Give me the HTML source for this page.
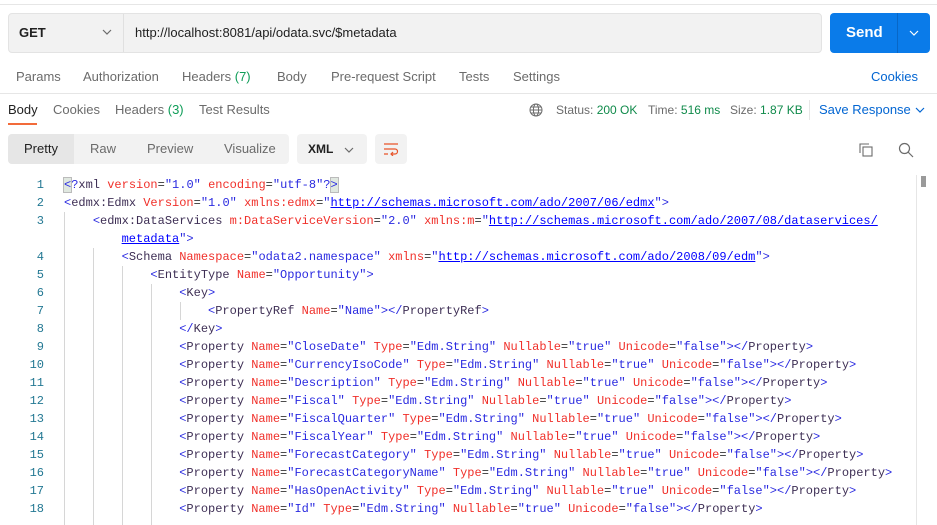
<!DOCTYPE html>
<html><head><meta charset="utf-8"><style>
*{margin:0;padding:0;box-sizing:border-box}
body{width:937px;height:525px;overflow:hidden;background:#fff;font-family:"Liberation Sans",sans-serif;position:relative;color:#6b6b6b}
.abs{position:absolute}
.t13{font-size:13px;white-space:nowrap}
.code{position:absolute;left:0;top:176px;font-family:"Liberation Mono",monospace;font-size:12px;}
.row{height:18px;line-height:18px;white-space:pre;position:relative}
.ln{position:absolute;left:0;width:44px;text-align:right;color:#237893}
.tx{position:absolute;left:64px}
.b{color:#2a2ae0}.n{color:#3e2f55}.a{color:#f0302a}.v{color:#2a2ae0}.e{color:#333}
.u{color:#0000ff;text-decoration:underline}
.g{position:absolute;width:1px;background:#d6d6d6}
</style></head><body>
<div class="abs" style="left:0;top:4px;width:937px;height:1px;background:#e6e6e6"></div>
<div class="abs" style="left:8px;top:13px;width:814px;height:40px;background:#f2f2f2;border:1px solid #e3e3e3;border-radius:4px"></div>
<div class="abs" style="left:123px;top:14px;width:1px;height:38px;background:#e0e0e0"></div>
<div class="abs t13" style="left:19px;top:25px;font-weight:bold;color:#212121">GET</div>
<svg class="abs" style="left:102px;top:29px" width="10" height="6"><path d="M1 1l4 4 4-4" fill="none" stroke="#6b6b6b" stroke-width="1.2"/></svg>
<div class="abs t13" style="left:135px;top:25px;color:#212121">http://localhost:8081/api/odata.svc/$metadata</div>
<div class="abs" style="left:830px;top:13px;width:100px;height:40px;background:#0a7be9;border-radius:4px"></div>
<div class="abs" style="left:897px;top:13px;width:1px;height:40px;background:#0867c7"></div>
<div class="abs" style="left:846px;top:24px;font-size:15px;font-weight:bold;color:#fff">Send</div>
<svg class="abs" style="left:909px;top:30px" width="10" height="6"><path d="M1 1l4 4 4-4" fill="none" stroke="#fff" stroke-width="1.2"/></svg>
<div class="abs t13" style="left:16px;top:69px">Params</div>
<div class="abs t13" style="left:83px;top:69px">Authorization</div>
<div class="abs t13" style="left:182px;top:69px">Headers <span style="color:#0f9d58">(7)</span></div>
<div class="abs t13" style="left:277px;top:69px">Body</div>
<div class="abs t13" style="left:331px;top:69px">Pre-request Script</div>
<div class="abs t13" style="left:459px;top:69px">Tests</div>
<div class="abs t13" style="left:513px;top:69px">Settings</div>
<div class="abs t13" style="left:871px;top:69px;color:#0265d2">Cookies</div>
<div class="abs" style="left:0;top:93px;width:937px;height:1px;background:#e6e6e6"></div>
<div class="abs t13" style="left:8px;top:102px;color:#212121">Body</div>
<div class="abs" style="left:8px;top:123px;width:29px;height:2px;background:#f26b3a"></div>
<div class="abs t13" style="left:53px;top:102px">Cookies</div>
<div class="abs t13" style="left:115px;top:102px">Headers <span style="color:#0f9d58">(3)</span></div>
<div class="abs t13" style="left:199px;top:102px">Test Results</div>
<svg class="abs" style="left:529px;top:103px" width="14" height="14" fill="none" stroke="#6b6b6b" stroke-width="1"><circle cx="7" cy="7" r="6"/><ellipse cx="7" cy="7" rx="2.6" ry="6"/><path d="M1 7h12M2 4h10M2 10h10"/></svg>
<div class="abs" style="left:556px;top:103px;font-size:12px;white-space:nowrap">Status: <span style="color:#0f8a4a">200 OK</span></div>
<div class="abs" style="left:648px;top:103px;font-size:12px;white-space:nowrap">Time: <span style="color:#0f8a4a">516 ms</span></div>
<div class="abs" style="left:730px;top:103px;font-size:12px;white-space:nowrap">Size: <span style="color:#0f8a4a">1.87 KB</span></div>
<div class="abs" style="left:809px;top:100px;width:1px;height:20px;background:#e6e6e6"></div>
<div class="abs t13" style="left:819px;top:102px;color:#0265d2">Save Response</div>
<svg class="abs" style="left:915px;top:107px" width="10" height="6"><path d="M1 1l4 4 4-4" fill="none" stroke="#0265d2" stroke-width="1.2"/></svg>
<div class="abs" style="left:8px;top:134px;width:281px;height:30px;background:#f2f2f2;border-radius:4px"></div>
<div class="abs" style="left:8px;top:134px;width:66px;height:30px;background:#e6e6e6;border-radius:4px 0 0 4px"></div>
<div class="abs t13" style="left:24px;top:141px;color:#212121">Pretty</div>
<div class="abs t13" style="left:90px;top:141px">Raw</div>
<div class="abs t13" style="left:147px;top:141px">Preview</div>
<div class="abs t13" style="left:224px;top:141px">Visualize</div>
<div class="abs" style="left:297px;top:134px;width:70px;height:30px;background:#f2f2f2;border-radius:4px"></div>
<div class="abs" style="left:308px;top:142px;font-size:12px;font-weight:bold;color:#212121">XML</div>
<svg class="abs" style="left:344px;top:147px" width="10" height="6"><path d="M1 1l4 4 4-4" fill="none" stroke="#6b6b6b" stroke-width="1.2"/></svg>
<div class="abs" style="left:375px;top:134px;width:32px;height:30px;background:#f2f2f2;border-radius:4px"></div>
<svg class="abs" style="left:383px;top:142px" width="16" height="14" fill="none" stroke="#e8542a" stroke-width="1.2"><path d="M1 2h14M1 7h11a2.5 2.5 0 0 1 0 5H8M10 10l-2 2 2 2M1 12h4"/></svg>
<svg class="abs" style="left:858px;top:142px" width="16" height="16" fill="none" stroke="#6b6b6b" stroke-width="1.1"><rect x="5" y="5" width="9" height="9"/><path d="M2 11V2h9"/></svg>
<svg class="abs" style="left:898px;top:142px" width="16" height="16" fill="none" stroke="#6b6b6b" stroke-width="1.2"><circle cx="6.5" cy="6.5" r="5"/><path d="M10 10l5 5"/></svg>
<div class="abs" style="left:916px;top:175px;width:1px;height:350px;background:#e6e6e6"></div>
<div class="abs" style="left:921px;top:176px;width:5px;height:11px;background:#9a9a9a"></div>
<div class="g" style="left:64px;top:212px;height:313px"></div>
<div class="g" style="left:93px;top:248px;height:277px"></div>
<div class="g" style="left:122px;top:266px;height:259px"></div>
<div class="g" style="left:151px;top:284px;height:241px"></div>
<div class="g" style="left:180px;top:302px;height:18px"></div>
<div class="code">
<div class="row"><span class="ln">1</span><span class="tx"><span class="b" style="background:#e0e8e0;outline:1px solid #bbb">&lt;</span><span class="b">?</span><span class="n">xml</span> <span class="a">version</span><span class="e">=</span><span class="v">"1.0"</span> <span class="a">encoding</span><span class="e">=</span><span class="v">"utf-8"</span><span class="b">?</span><span class="b" style="background:#e0e8e0;outline:1px solid #bbb">&gt;</span></span></div>
<div class="row"><span class="ln">2</span><span class="tx"><span class="b">&lt;</span><span class="n">edmx:Edmx</span> <span class="a">Version</span><span class="e">=</span><span class="v">"1.0"</span> <span class="a">xmlns:edmx</span><span class="e">=</span><span class="v">"</span><span class="u">http://schemas.microsoft.com/ado/2007/06/edmx</span><span class="v">"</span><span class="b">&gt;</span></span></div>
<div class="row"><span class="ln">3</span><span class="tx">    <span class="b">&lt;</span><span class="n">edmx:DataServices</span> <span class="a">m:DataServiceVersion</span><span class="e">=</span><span class="v">"2.0"</span> <span class="a">xmlns:m</span><span class="e">=</span><span class="v">"</span><span class="u">http://schemas.microsoft.com/ado/2007/08/dataservices/</span></span></div>
<div class="row"><span class="tx">        <span class="u">metadata</span><span class="v">"</span><span class="b">&gt;</span></span></div>
<div class="row"><span class="ln">4</span><span class="tx">        <span class="b">&lt;</span><span class="n">Schema</span> <span class="a">Namespace</span><span class="e">=</span><span class="v">"odata2.namespace"</span> <span class="a">xmlns</span><span class="e">=</span><span class="v">"</span><span class="u">http://schemas.microsoft.com/ado/2008/09/edm</span><span class="v">"</span><span class="b">&gt;</span></span></div>
<div class="row"><span class="ln">5</span><span class="tx">            <span class="b">&lt;</span><span class="n">EntityType</span> <span class="a">Name</span><span class="e">=</span><span class="v">"Opportunity"</span><span class="b">&gt;</span></span></div>
<div class="row"><span class="ln">6</span><span class="tx">                <span class="b">&lt;</span><span class="n">Key</span><span class="b">&gt;</span></span></div>
<div class="row"><span class="ln">7</span><span class="tx">                    <span class="b">&lt;</span><span class="n">PropertyRef</span> <span class="a">Name</span><span class="e">=</span><span class="v">"Name"</span><span class="b">&gt;&lt;/</span><span class="n">PropertyRef</span><span class="b">&gt;</span></span></div>
<div class="row"><span class="ln">8</span><span class="tx">                <span class="b">&lt;/</span><span class="n">Key</span><span class="b">&gt;</span></span></div>
<div class="row"><span class="ln">9</span><span class="tx">                <span class="b">&lt;</span><span class="n">Property</span> <span class="a">Name</span><span class="e">=</span><span class="v">"CloseDate"</span> <span class="a">Type</span><span class="e">=</span><span class="v">"Edm.String"</span> <span class="a">Nullable</span><span class="e">=</span><span class="v">"true"</span> <span class="a">Unicode</span><span class="e">=</span><span class="v">"false"</span><span class="b">&gt;&lt;/</span><span class="n">Property</span><span class="b">&gt;</span></span></div>
<div class="row"><span class="ln">10</span><span class="tx">                <span class="b">&lt;</span><span class="n">Property</span> <span class="a">Name</span><span class="e">=</span><span class="v">"CurrencyIsoCode"</span> <span class="a">Type</span><span class="e">=</span><span class="v">"Edm.String"</span> <span class="a">Nullable</span><span class="e">=</span><span class="v">"true"</span> <span class="a">Unicode</span><span class="e">=</span><span class="v">"false"</span><span class="b">&gt;&lt;/</span><span class="n">Property</span><span class="b">&gt;</span></span></div>
<div class="row"><span class="ln">11</span><span class="tx">                <span class="b">&lt;</span><span class="n">Property</span> <span class="a">Name</span><span class="e">=</span><span class="v">"Description"</span> <span class="a">Type</span><span class="e">=</span><span class="v">"Edm.String"</span> <span class="a">Nullable</span><span class="e">=</span><span class="v">"true"</span> <span class="a">Unicode</span><span class="e">=</span><span class="v">"false"</span><span class="b">&gt;&lt;/</span><span class="n">Property</span><span class="b">&gt;</span></span></div>
<div class="row"><span class="ln">12</span><span class="tx">                <span class="b">&lt;</span><span class="n">Property</span> <span class="a">Name</span><span class="e">=</span><span class="v">"Fiscal"</span> <span class="a">Type</span><span class="e">=</span><span class="v">"Edm.String"</span> <span class="a">Nullable</span><span class="e">=</span><span class="v">"true"</span> <span class="a">Unicode</span><span class="e">=</span><span class="v">"false"</span><span class="b">&gt;&lt;/</span><span class="n">Property</span><span class="b">&gt;</span></span></div>
<div class="row"><span class="ln">13</span><span class="tx">                <span class="b">&lt;</span><span class="n">Property</span> <span class="a">Name</span><span class="e">=</span><span class="v">"FiscalQuarter"</span> <span class="a">Type</span><span class="e">=</span><span class="v">"Edm.String"</span> <span class="a">Nullable</span><span class="e">=</span><span class="v">"true"</span> <span class="a">Unicode</span><span class="e">=</span><span class="v">"false"</span><span class="b">&gt;&lt;/</span><span class="n">Property</span><span class="b">&gt;</span></span></div>
<div class="row"><span class="ln">14</span><span class="tx">                <span class="b">&lt;</span><span class="n">Property</span> <span class="a">Name</span><span class="e">=</span><span class="v">"FiscalYear"</span> <span class="a">Type</span><span class="e">=</span><span class="v">"Edm.String"</span> <span class="a">Nullable</span><span class="e">=</span><span class="v">"true"</span> <span class="a">Unicode</span><span class="e">=</span><span class="v">"false"</span><span class="b">&gt;&lt;/</span><span class="n">Property</span><span class="b">&gt;</span></span></div>
<div class="row"><span class="ln">15</span><span class="tx">                <span class="b">&lt;</span><span class="n">Property</span> <span class="a">Name</span><span class="e">=</span><span class="v">"ForecastCategory"</span> <span class="a">Type</span><span class="e">=</span><span class="v">"Edm.String"</span> <span class="a">Nullable</span><span class="e">=</span><span class="v">"true"</span> <span class="a">Unicode</span><span class="e">=</span><span class="v">"false"</span><span class="b">&gt;&lt;/</span><span class="n">Property</span><span class="b">&gt;</span></span></div>
<div class="row"><span class="ln">16</span><span class="tx">                <span class="b">&lt;</span><span class="n">Property</span> <span class="a">Name</span><span class="e">=</span><span class="v">"ForecastCategoryName"</span> <span class="a">Type</span><span class="e">=</span><span class="v">"Edm.String"</span> <span class="a">Nullable</span><span class="e">=</span><span class="v">"true"</span> <span class="a">Unicode</span><span class="e">=</span><span class="v">"false"</span><span class="b">&gt;&lt;/</span><span class="n">Property</span><span class="b">&gt;</span></span></div>
<div class="row"><span class="ln">17</span><span class="tx">                <span class="b">&lt;</span><span class="n">Property</span> <span class="a">Name</span><span class="e">=</span><span class="v">"HasOpenActivity"</span> <span class="a">Type</span><span class="e">=</span><span class="v">"Edm.String"</span> <span class="a">Nullable</span><span class="e">=</span><span class="v">"true"</span> <span class="a">Unicode</span><span class="e">=</span><span class="v">"false"</span><span class="b">&gt;&lt;/</span><span class="n">Property</span><span class="b">&gt;</span></span></div>
<div class="row"><span class="ln">18</span><span class="tx">                <span class="b">&lt;</span><span class="n">Property</span> <span class="a">Name</span><span class="e">=</span><span class="v">"Id"</span> <span class="a">Type</span><span class="e">=</span><span class="v">"Edm.String"</span> <span class="a">Nullable</span><span class="e">=</span><span class="v">"true"</span> <span class="a">Unicode</span><span class="e">=</span><span class="v">"false"</span><span class="b">&gt;&lt;/</span><span class="n">Property</span><span class="b">&gt;</span></span></div>
</div>
</body></html>
